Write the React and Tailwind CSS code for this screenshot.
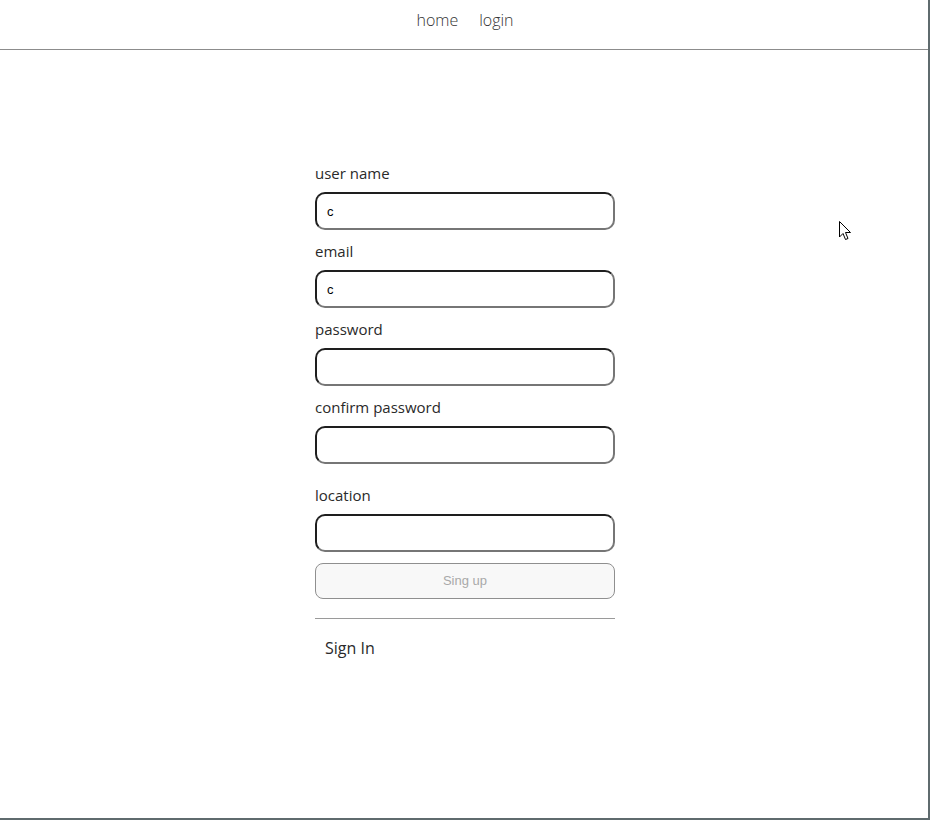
import React from "react";

const font = { fontFamily: '"Open Sans", "Noto Sans", sans-serif' };

function Field({ label, value = "", extraTop = false }) {
  return (
    <div className="flex flex-col">
      <label
        className={`${extraTop ? "pt-[20px]" : "pt-[10px]"} text-[15px] leading-[22px] text-[#2a2a2a] mb-[8px]`}
        style={font}
      >
        {label}
      </label>
      <input
        readOnly
        value={value}
        className="h-[38px] w-full rounded-[10px] border-2 border-t-[#1e1e1e] border-l-[#1e1e1e] border-b-[#767676] border-r-[#767676] px-[10px] text-[13px] text-black outline-none font-['Liberation_Sans',Arial,sans-serif]"
      />
    </div>
  );
}

export default function App() {
  return (
    <div className="relative w-[930px] h-[820px] bg-white border-r-2 border-b-2 border-[#5f6b6e] overflow-hidden">
      <header className="h-[50px] border-b border-[#8c8c8c] flex items-center justify-center gap-[21px] pb-[9px] pl-[2px]">
        <a className="text-[16px] text-[#333] font-light" style={font}>home</a>
        <a className="text-[16px] text-[#333] font-light" style={font}>login</a>
      </header>
      <main className="flex justify-center pt-[102px] pl-[2px]">
        <div className="w-[300px] flex flex-col">
          <Field label="user name" value="c" />
          <Field label="email" value="c" />
          <Field label="password" />
          <Field label="confirm password" />
          <Field label="location" extraTop />
          <button className="mt-[11px] h-[36px] w-full rounded-[8px] border border-[#8f8f8f] bg-[#f8f8f8] text-[13px] text-[#a9a9a9] font-['Liberation_Sans',Arial,sans-serif]">
            Sing up
          </button>
          <hr className="mt-[19px] border-t border-[#9a9a9a]" />
          <a className="mt-[18px] ml-[10px] text-[16px] leading-[22px] text-[#2a2a2a]" style={font}>
            Sign In
          </a>
        </div>
      </main>
      <svg className="absolute left-[839px] top-[221px]" width="13" height="20" viewBox="0 0 13 20">
        <path d="M0.5 0.5 L0.5 16 L4 12.5 L6.5 18.5 L9 17.5 L6.5 11.5 L11.5 11.5 Z" fill="white" stroke="black" strokeWidth="1" strokeLinejoin="miter" />
      </svg>
    </div>
  );
}
